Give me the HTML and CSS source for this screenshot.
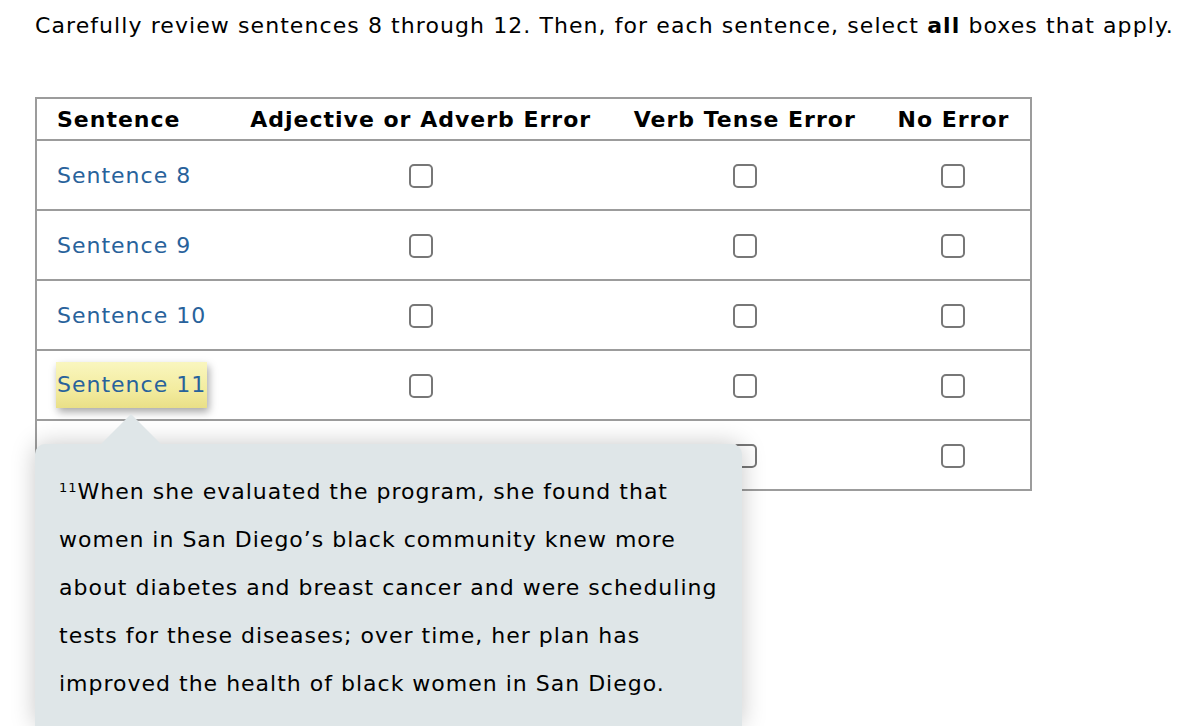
FILE: index.html
```html
<!DOCTYPE html>
<html lang="en">
<head>
<meta charset="utf-8">
<title>Review sentences</title>
<link rel="stylesheet" href="styles.css">
</head>
<body>
<main class="page">
  <p class="prompt">Carefully review sentences 8 through 12. Then, for each sentence, select <b>all</b> boxes that apply.</p>
  <div class="grid-wrap">
    <table class="grid">
      <thead>
        <tr>
          <th class="col-sent">Sentence</th>
          <th>Adjective or Adverb Error</th>
          <th>Verb Tense Error</th>
          <th>No Error</th>
        </tr>
      </thead>
      <tbody>
        <tr>
          <td class="col-sent"><span class="sent">Sentence 8</span></td>
          <td class="box-cell"><span class="box"></span></td>
          <td class="box-cell"><span class="box"></span></td>
          <td class="box-cell"><span class="box"></span></td>
        </tr>
        <tr>
          <td class="col-sent"><span class="sent">Sentence 9</span></td>
          <td class="box-cell"><span class="box"></span></td>
          <td class="box-cell"><span class="box"></span></td>
          <td class="box-cell"><span class="box"></span></td>
        </tr>
        <tr>
          <td class="col-sent"><span class="sent">Sentence 10</span></td>
          <td class="box-cell"><span class="box"></span></td>
          <td class="box-cell"><span class="box"></span></td>
          <td class="box-cell"><span class="box"></span></td>
        </tr>
        <tr>
          <td class="col-sent"><span class="sent sent-active">Sentence 11</span></td>
          <td class="box-cell"><span class="box"></span></td>
          <td class="box-cell"><span class="box"></span></td>
          <td class="box-cell"><span class="box"></span></td>
        </tr>
        <tr>
          <td class="col-sent"><span class="sent">Sentence 12</span></td>
          <td class="box-cell"><span class="box"></span></td>
          <td class="box-cell"><span class="box"></span></td>
          <td class="box-cell"><span class="box"></span></td>
        </tr>
      </tbody>
    </table>
    <div class="tip">
      <div class="tip-arrow"></div>
      <p class="tip-text"><sup class="num">11</sup>When she evaluated the program, she found that<br>women in San Diego’s black community knew more<br>about diabetes and breast cancer and were scheduling<br>tests for these diseases; over time, her plan has<br>improved the health of black women in San Diego.</p>
    </div>
  </div>
</main>
</body>
</html>
```

FILE: styles.css
```css
html, body {
  margin: 0;
  padding: 0;
  background: #fff;
}

body {
  font-family: "DejaVu Sans", Verdana, sans-serif;
  color: #000;
}

.page {
  padding: 0 0 0 35px;
  height: 726px;
  box-sizing: border-box;
}

.prompt {
  margin: 0;
  padding-top: 12px;
  font-size: 22px;
  letter-spacing: 1.08px;
  line-height: 28px;
  white-space: nowrap;
}

.grid-wrap {
  position: relative;
  margin-top: 57px;
  width: 997px;
}

.grid {
  border-collapse: collapse;
  border: 2px solid #9c9c9c;
  width: 997px;
}

.grid th {
  font-size: 22px;
  letter-spacing: 1px;
  font-weight: bold;
  text-align: center;
  padding: 0 20px;
  height: 40px;
  white-space: nowrap;
}

.grid th.col-sent {
  text-align: left;
}

.grid td {
  border-top: 2px solid #9c9c9c;
  height: 68px;
  padding: 0 20px;
  font-size: 22px;
  letter-spacing: 1px;
  white-space: nowrap;
}

.box-cell {
  text-align: center;
}

.sent {
  color: #28629b;
}

.sent-active {
  display: inline-block;
  margin-left: -1px;
  padding: 11px 1px 11px 1px;
  line-height: 24px;
  background: linear-gradient(#f9f6bf, #f3ec9f 60%, #e9df87);
  box-shadow: 2px 4px 8px rgba(0, 0, 0, 0.35);
}

.box {
  display: inline-block;
  width: 20px;
  height: 20px;
  border: 2px solid #777;
  border-radius: 5px;
  vertical-align: middle;
  background: #fff;
}

.tip {
  position: absolute;
  left: 0;
  top: 347px;
  width: 707px;
  height: 282px;
  background: #dfe6e8;
  border-radius: 10px 10px 0 0;
  box-shadow: 0 0 24px rgba(0, 0, 0, 0.22);
}

.tip-arrow {
  position: absolute;
  left: 66px;
  top: -30px;
  width: 0;
  height: 0;
  border-left: 30px solid transparent;
  border-right: 30px solid transparent;
  border-bottom: 30px solid #dfe6e8;
}

.tip-text {
  margin: 0;
  padding: 24px 0 0 24px;
  font-size: 22px;
  letter-spacing: 1px;
  line-height: 48px;
  white-space: nowrap;
}

.num {
  font-size: 13px;
  letter-spacing: 1px;
  vertical-align: 7px;
  line-height: 0;
}
```
